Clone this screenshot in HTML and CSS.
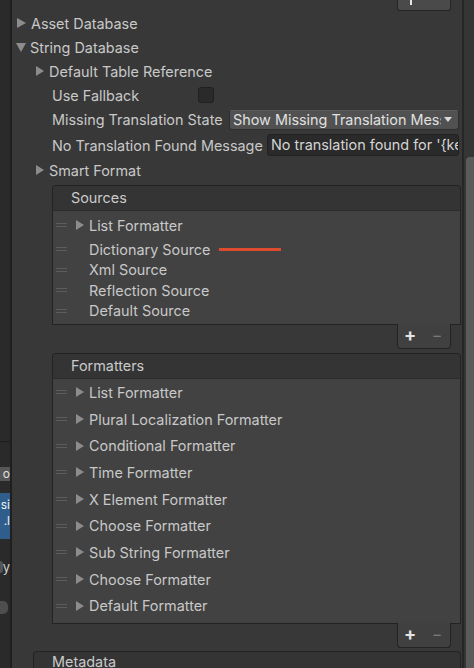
FILE: index.html
```html
<!DOCTYPE html>
<html>
<head>
<meta charset="utf-8">
<link rel="stylesheet" href="styles.css">
</head>
<body>
<div class="window">
  <div class="sidebar">
    <div class="sb-top"></div>
    <div class="sb-divider"></div>
    <div class="sb-gray">o</div>
    <div class="sb-blue"><span>si</span><span>.l</span></div>
    <div class="sb-y"><span class="sb-dot"></span>y</div>
    <div class="sb-pill"></div>
  </div>

  <div class="inspector">
    <div class="top-row"><div class="mini-btn"><span class="plus-stub"></span></div></div>

    <div class="row l1">
      <svg class="tri" width="9" height="10" viewBox="0 0 9 10"><polygon points="0,0 9,5 0,10"/></svg>
      <span>Asset Database</span>
    </div>
    <div class="row l1">
      <svg class="tri down" width="10" height="9" viewBox="0 0 10 9"><polygon points="0,0 10,0 5,9"/></svg>
      <span>String Database</span>
    </div>
    <div class="row l2">
      <svg class="tri" width="8" height="10" viewBox="0 0 8 10"><polygon points="0,0 8,5 0,10"/></svg>
      <span>Default Table Reference</span>
    </div>
    <div class="row l2 plain">
      <span class="label">Use Fallback</span>
      <span class="checkbox"></span>
    </div>
    <div class="row l2 plain tall">
      <span class="label">Missing Translation State</span>
      <div class="dropdown">
        <span class="dd-text">Show Missing Translation Message</span>
        <svg class="dd-arrow" width="8" height="5" viewBox="0 0 8 5"><polygon points="0,0 8,0 4,5"/></svg>
      </div>
    </div>
    <div class="row l2 plain taller">
      <span class="label">No Translation Found Message</span>
      <div class="textfield">No translation found for '{key}' in {table.TableCollectionName}</div>
    </div>
    <div class="row l2">
      <svg class="tri" width="8" height="10" viewBox="0 0 8 10"><polygon points="0,0 8,5 0,10"/></svg>
      <span>Smart Format</span>
    </div>

    <div class="list sources">
      <div class="list-header">Sources</div>
      <div class="list-body">
        <div class="item first">
          <span class="handle"></span>
          <svg class="tri" width="8" height="10" viewBox="0 0 8 10"><polygon points="0,0 8,5 0,10"/></svg>
          <span>List Formatter</span>
        </div>
        <div class="item short">
          <span class="handle"></span><span class="notri"></span>
          <span>Dictionary Source</span><span class="redline"></span>
        </div>
        <div class="item short">
          <span class="handle"></span><span class="notri"></span>
          <span>Xml Source</span>
        </div>
        <div class="item short">
          <span class="handle"></span><span class="notri"></span>
          <span>Reflection Source</span>
        </div>
        <div class="item short">
          <span class="handle"></span><span class="notri"></span>
          <span>Default Source</span>
        </div>
      </div>
      <div class="list-footer">
        <div class="footer-btns"><span class="fb plus">+</span><span class="fb minus">−</span></div>
      </div>
    </div>

    <div class="list formatters">
      <div class="list-header">Formatters</div>
      <div class="list-body">
        <div class="item f"><span class="handle"></span><svg class="tri" width="8" height="10" viewBox="0 0 8 10"><polygon points="0,0 8,5 0,10"/></svg><span>List Formatter</span></div>
        <div class="item f"><span class="handle"></span><svg class="tri" width="8" height="10" viewBox="0 0 8 10"><polygon points="0,0 8,5 0,10"/></svg><span>Plural Localization Formatter</span></div>
        <div class="item f"><span class="handle"></span><svg class="tri" width="8" height="10" viewBox="0 0 8 10"><polygon points="0,0 8,5 0,10"/></svg><span>Conditional Formatter</span></div>
        <div class="item f"><span class="handle"></span><svg class="tri" width="8" height="10" viewBox="0 0 8 10"><polygon points="0,0 8,5 0,10"/></svg><span>Time Formatter</span></div>
        <div class="item f"><span class="handle"></span><svg class="tri" width="8" height="10" viewBox="0 0 8 10"><polygon points="0,0 8,5 0,10"/></svg><span>X Element Formatter</span></div>
        <div class="item f"><span class="handle"></span><svg class="tri" width="8" height="10" viewBox="0 0 8 10"><polygon points="0,0 8,5 0,10"/></svg><span>Choose Formatter</span></div>
        <div class="item f"><span class="handle"></span><svg class="tri" width="8" height="10" viewBox="0 0 8 10"><polygon points="0,0 8,5 0,10"/></svg><span>Sub String Formatter</span></div>
        <div class="item f"><span class="handle"></span><svg class="tri" width="8" height="10" viewBox="0 0 8 10"><polygon points="0,0 8,5 0,10"/></svg><span>Choose Formatter</span></div>
        <div class="item f"><span class="handle"></span><svg class="tri" width="8" height="10" viewBox="0 0 8 10"><polygon points="0,0 8,5 0,10"/></svg><span>Default Formatter</span></div>
      </div>
      <div class="list-footer">
        <div class="footer-btns"><span class="fb plus">+</span><span class="fb minus">−</span></div>
      </div>
    </div>

    <div class="metadata">
      <div class="meta-header">Metadata</div>
    </div>
  </div>

  <div class="scrollbar"><div class="thumb"></div></div>
</div>
</body>
</html>
```

FILE: styles.css
```css
* { box-sizing: border-box; }
html, body { margin: 0; padding: 0; background: #383838; }
body {
  font-family: Inter, "Noto Sans", "DejaVu Sans", sans-serif;
  font-size: 14.4px;
  color: #c8c8c8;
  overflow: hidden;
}
.window {
  display: flex;
  width: 474px;
  height: 668px;
  overflow: hidden;
}

/* left strip */
.sidebar {
  width: 12px;
  flex: none;
  background: #2a2a2a;
  border-right: 2px solid #1f1f1f;
  display: flex;
  flex-direction: column;
  overflow: hidden;
}
.sidebar > * { flex-shrink: 0; }
.sb-top { height: 441px; }
.sb-divider { height: 1px; background: #1e1e1e; }
.sb-gray {
  margin-top: 25px;
  height: 14px;
  background: #575757;
  color: #e0e0e0;
  font-size: 12px;
  line-height: 13px;
  text-align: right;
}
.sb-blue {
  margin-top: 12px;
  height: 46px;
  background: #2f5e8c;
  color: #f0f0f0;
  display: flex;
  flex-direction: column;
  align-items: flex-end;
  font-size: 12px;
  line-height: 16px;
  padding-top: 4px;
}
.sb-y {
  margin-top: 20px;
  height: 16px;
  display: flex;
  align-items: center;
  justify-content: space-between;
  color: #d0d0d0;
  font-size: 13px;
}
.sb-dot {
  width: 5px; height: 12px;
  background: #555;
  border-radius: 0 4px 4px 0;
}
.sb-pill {
  margin-top: 26px;
  width: 8px;
  height: 13px;
  background: #4e4e4e;
  border-radius: 0 5px 5px 0;
}

/* main inspector */
.inspector {
  width: 450px;
  flex: none;
  display: flex;
  flex-direction: column;
}
.inspector > * { flex-shrink: 0; }
.top-row {
  height: 11px;
  display: flex;
  justify-content: flex-end;
  padding-right: 11px;
  overflow: hidden;
}
.mini-btn {
  width: 54px;
  height: 11px;
  background: #4a4a4a;
  border: 1px solid #262626;
  border-top: none;
  border-radius: 0 0 3px 3px;
  padding-left: 12px;
}
.plus-stub {
  display: block;
  width: 2px;
  height: 5px;
  background: #e6e6e6;
}
.row {
  display: flex;
  align-items: center;
  height: 24px;
  white-space: nowrap;
}
.row.tall { height: 25px; }
.row.taller { height: 26px; }
.tri { fill: #8c8c8c; flex: none; }
.l1 { padding-left: 5px; }
.l1 .tri { margin-right: 5px; }
.l1 .tri.down { margin-right: 4px; margin-left: -1px; }
.l2 { padding-left: 24px; }
.l2 .tri { margin-right: 5px; }
.l2.plain { padding-left: 40px; }
.label { flex: none; }
.checkbox {
  margin-left: auto;
  margin-right: 248px;
  width: 16px;
  height: 16px;
  background: #2a2a2a;
  border: 1px solid #202020;
  border-radius: 3px;
  flex: none;
}
.dropdown {
  margin-left: auto;
  margin-right: 3px;
  width: 230px;
  height: 20px;
  background: #515151;
  border: 1px solid #2e2e2e;
  border-top-color: #5a5a5a;
  border-radius: 3px;
  display: flex;
  align-items: center;
  padding: 0 6px 0 3px;
  color: #e0e0e0;
  flex: none;
}
.dd-text {
  flex: 1;
  overflow: hidden;
  white-space: nowrap;
}
.dd-arrow { fill: #d8d8d8; margin-left: 3px; flex: none; }
.textfield {
  margin-left: auto;
  margin-right: 3px;
  width: 192px;
  height: 22px;
  background: #2a2a2a;
  border: 1px solid #212121;
  border-radius: 3px;
  padding: 0 3px;
  line-height: 20px;
  color: #d4d4d4;
  overflow: hidden;
  white-space: nowrap;
  flex: none;
}

/* reorderable lists */
.list {
  margin-left: 40px;
  margin-right: 1px;
  display: flex;
  flex-direction: column;
}
.list > * { flex-shrink: 0; }
.sources { margin-top: 3px; }
.formatters { margin-top: 4px; }
.list-header {
  height: 25px;
  background: #343434;
  border: 1px solid #232323;
  border-bottom: none;
  border-radius: 4px 4px 0 0;
  padding-left: 18px;
  line-height: 23px;
  color: #cacaca;
}
.list-body {
  background: #424242;
  border: 1px solid #232323;
  border-top: 1px solid #2a2a2a;
  display: flex;
  flex-direction: column;
  white-space: nowrap;
}
.list-body > * { flex-shrink: 0; }
.sources .list-body { height: 115px; }
.formatters .list-body { height: 246px; }
.item {
  display: flex;
  align-items: center;
  padding-left: 3px;
}
.item.first { height: 28px; }
.item.short { height: 20.5px; }
.item.f { height: 26.7px; }
.handle {
  width: 11px;
  height: 4px;
  border-top: 1px solid #5c5c5c;
  border-bottom: 1px solid #5c5c5c;
  margin-right: 9px;
  flex: none;
}
.item .tri { margin-right: 5px; }
.notri { width: 13px; flex: none; }
.redline {
  width: 62px;
  height: 3px;
  background: #dd4a2e;
  margin-left: 9px;
  flex: none;
}
.list-footer {
  display: flex;
  justify-content: flex-end;
  padding-right: 10px;
}
.footer-btns {
  margin-top: -1px;
  width: 54px;
  height: 25px;
  background: #404040;
  border: 1px solid #232323;
  border-top: none;
  border-radius: 0 0 4px 4px;
  display: flex;
  align-items: center;
  padding-bottom: 2px;
}
.fb { font-size: 18px; font-weight: 700; line-height: 1; text-align: center; }
.fb.plus { color: #e4e4e4; width: 24px; }
.fb.minus { color: #7a7a7a; font-weight: 400; font-size: 16px; width: 14px; margin-left: 8px; }

.metadata {
  margin-top: 3px;
  margin-left: 21px;
  margin-right: 1px;
}
.meta-header {
  height: 26px;
  background: #343434;
  border: 1px solid #232323;
  border-bottom: none;
  border-radius: 4px 4px 0 0;
  padding-left: 18px;
  line-height: 20px;
  color: #cacaca;
}

/* scrollbar */
.scrollbar {
  width: 12px;
  flex: none;
  background: #353535;
  border-left: 2px solid #262626;
  padding-top: 157px;
  padding-left: 2px;
}
.thumb {
  height: 600px;
  background: #5b5b5b;
  border-radius: 4px 0 0 0;
}
```
